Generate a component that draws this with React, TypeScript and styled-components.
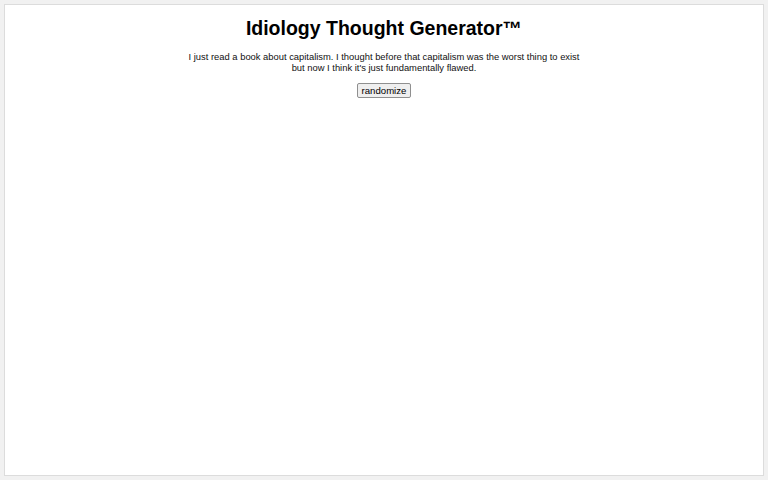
import React, { useState } from "react";
import styled, { createGlobalStyle } from "styled-components";

const thoughts = [
  "I just read a book about capitalism. I thought before that capitalism was the worst thing to exist but now I think it's just fundamentally flawed.",
  "I just read a book about socialism. I thought before that socialism was the best thing to exist but now I think it's just misunderstood.",
  "I just read a book about anarchism. I thought before that anarchism was pure chaos but now I think it's just poorly organized.",
];

const GlobalStyle = createGlobalStyle`
  html, body {
    margin: 0;
    padding: 0;
    background: #f1f1f1;
    font-family: "Liberation Sans", Arial, sans-serif;
  }
`;

const Page = styled.div`
  padding: 4px;
  box-sizing: border-box;
  height: 480px;
`;

const Card = styled.main`
  box-sizing: border-box;
  height: 472px;
  background: #ffffff;
  border: 1px solid #dcdcdc;
  display: flex;
  flex-direction: column;
  align-items: center;
  padding-top: 11px;
`;

const Title = styled.h1`
  margin: 0;
  font-size: 19.5px;
  font-weight: bold;
  color: #000;
  line-height: 24px;
`;

const Thought = styled.p`
  margin: 11px 0 0;
  max-width: 400px;
  font-size: 9.4px;
  line-height: 11px;
  text-align: center;
  color: #111;
`;

const RandomButton = styled.button`
  margin-top: 10px;
  font-family: "Liberation Sans", Arial, sans-serif;
  font-size: 9.6px;
  padding: 1px 4px;
  background: #efefef;
  border: 1px solid #8f8f8f;
  border-radius: 2px;
  color: #000;
`;

const App: React.FC = () => {
  const [index, setIndex] = useState(0);

  return (
    <>
      <GlobalStyle />
      <Page>
        <Card>
          <Title>Idiology Thought Generator™</Title>
          <Thought>{thoughts[index]}</Thought>
          <RandomButton
            onClick={() => setIndex(Math.floor(Math.random() * thoughts.length))}
          >
            randomize
          </RandomButton>
        </Card>
      </Page>
    </>
  );
};

export default App;
